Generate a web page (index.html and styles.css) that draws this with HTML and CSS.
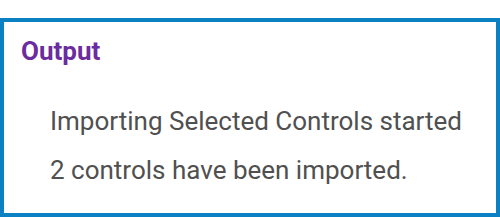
FILE: index.html
```html
<!DOCTYPE html>
<html lang="en">
<head>
    <meta charset="UTF-8">
    <meta name="viewport" content="width=device-width, initial-scale=1.0">
    <title>Output</title>
    <link rel="stylesheet" href="styles.css">
</head>
<body>
    <div class="output-panel">
        <h2 class="output-title">Output</h2>
        <div class="output-log">
            <div class="log-line">Importing Selected Controls started</div>
            <div class="log-line">2 controls have been imported.</div>
        </div>
    </div>
</body>
</html>
```

FILE: styles.css
```css
body {
    margin: 0;
    padding-top: 18px;
    font-family: Roboto, "Liberation Sans", sans-serif;
    background: #fff;
}
.output-panel {
    border: 4px solid #0b80c3;
    height: 199px;
    box-sizing: border-box;
    padding: 14px 17px;
}
.output-title {
    margin: 0;
    font-size: 26px;
    line-height: 30px;
    font-weight: 700;
    color: #6b2c9f;
}
.output-log {
    margin-top: 31px;
    padding-left: 29px;
}
.log-line {
    font-size: 26px;
    line-height: 49px;
    color: #505050;
}
```
